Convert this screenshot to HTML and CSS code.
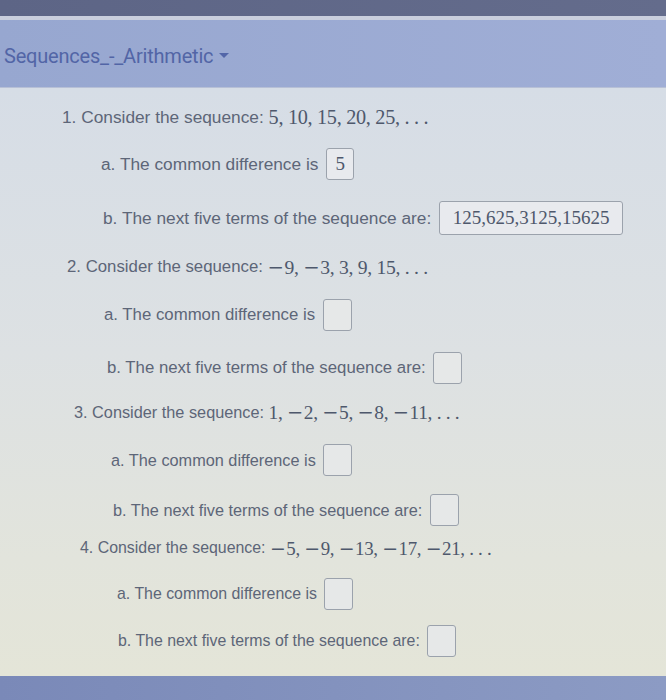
FILE: index.html
```html
<!DOCTYPE html>
<html>
<head>
<meta charset="utf-8">
<link rel="stylesheet" href="styles.css">
</head>
<body>
<div class="screen">
  <div class="topbar"></div>
  <div class="rule"></div>
  <header class="header">
    <span class="title">Sequences_-_Arithmetic</span>
    <svg class="caret" width="10" height="6" viewBox="0 0 10 6"><path d="M0 0 L10 0 L5 5 Z" fill="#5366a8"/></svg>
  </header>
  <main class="content">
    <section class="group g1">
      <div class="row q q1">1. Consider the sequence: <span class="math">5, 10, 15, 20, 25, . . .</span></div>
      <div class="row sub s1a">a. The common difference is <span class="box filled small">5</span></div>
      <div class="row sub s1b">b. The next five terms of the sequence are: <span class="box filled wide">125,625,3125,15625</span></div>
    </section>
    <section class="group g2">
      <div class="row q q2">2. Consider the sequence: <span class="math"><span class="m">−</span>9, <span class="m">−</span>3, 3, 9, 15, . . .</span></div>
      <div class="row sub s2a">a. The common difference is <span class="box empty"></span></div>
      <div class="row sub s2b">b. The next five terms of the sequence are: <span class="box empty"></span></div>
    </section>
    <section class="group g3">
      <div class="row q q3">3. Consider the sequence: <span class="math">1, <span class="m">−</span>2, <span class="m">−</span>5, <span class="m">−</span>8, <span class="m">−</span>11, . . .</span></div>
      <div class="row sub s3a">a. The common difference is <span class="box empty"></span></div>
      <div class="row sub s3b">b. The next five terms of the sequence are: <span class="box empty"></span></div>
    </section>
    <section class="group g4">
      <div class="row q q4">4. Consider the sequence: <span class="math"><span class="m">−</span>5, <span class="m">−</span>9, <span class="m">−</span>13, <span class="m">−</span>17, <span class="m">−</span>21, . . .</span></div>
      <div class="row sub s4a">a. The common difference is <span class="box empty"></span></div>
      <div class="row sub s4b">b. The next five terms of the sequence are: <span class="box empty"></span></div>
    </section>
  </main>
  <div class="bottombar"></div>
</div>
</body>
</html>
```

FILE: styles.css
```css
html, body {
  margin: 0;
  padding: 0;
}
body {
  width: 666px;
  height: 700px;
  overflow: hidden;
  font-family: "Liberation Sans", Arial, sans-serif;
}
.screen {
  display: flex;
  flex-direction: column;
  height: 700px;
  background: #d8dde3;
}
.topbar {
  height: 16px;
  background: linear-gradient(90deg, #5d6586, #646c8c);
}
.rule {
  height: 4px;
  background: #c9cedd;
}
.header {
  height: 67px;
  background: linear-gradient(90deg, #97a7d0, #a0aed6);
  display: flex;
  align-items: center;
  padding-left: 4px;
  gap: 6px;
  border-bottom: 1px solid #b7c0d6;
}
.title {
  font-family: Roboto, "Liberation Sans", sans-serif;
  font-size: 20px;
  color: #5265a6;
  letter-spacing: -0.2px;
  padding-top: 4px;
}
.caret {
  margin-top: 4px;
}
.content {
  flex: 1;
  display: flex;
  flex-direction: column;
  padding-top: 11px;
  background: linear-gradient(180deg, #d6dde6 0%, #dde1e3 45%, #e2e4dc 80%, #e4e5d8 100%);
  color: #5d6678;
}
.group {
  display: flex;
  flex-direction: column;
}
.g1 { font-size: 17.3px; }
.g2 { font-size: 16.8px; }
.g3 { font-size: 16.3px; }
.g4 { font-size: 15.9px; }
.row {
  display: flex;
  align-items: center;
  white-space: pre;
  height: 36px;
}
.math {
  font-family: "Liberation Serif", "Times New Roman", serif;
  font-size: 1.17em;
  color: #4e586c;
  letter-spacing: -0.3px;
}
.m {
  font-family: "DejaVu Serif", serif;
  letter-spacing: 0;
  padding-right: 0.5px;
}
.g3 .math {
  font-size: 1.19em;
}
.g4 .math {
  font-size: 1.19em;
}
.box {
  display: inline-flex;
  align-items: center;
  justify-content: center;
  border: 1px solid #9ba2ac;
  border-radius: 3px;
  background: #e8eaee;
  box-sizing: border-box;
  margin-left: 3px;
}
.box.filled {
  font-family: "Liberation Serif", "Times New Roman", serif;
  font-size: 19px;
  color: #4e586c;
  height: 32px;
}
.box.small {
  width: 28px;
}
.box.wide {
  width: 184px;
  height: 34px;
}
.box.empty {
  width: 29px;
  height: 32px;
  background: #e6e8e8;
}

.q1 { padding-left: 62px; }
.s1a { padding-left: 101px; margin-top: 11px; }
.s1b { padding-left: 103px; margin-top: 18px; }
.q2 { padding-left: 67px; margin-top: 13px; }
.s2a { padding-left: 104px; margin-top: 12px; }
.s2b { padding-left: 107px; margin-top: 17px; }
.q3 { padding-left: 74px; margin-top: 8px; }
.s3a { padding-left: 111px; margin-top: 12px; }
.s3b { padding-left: 113px; margin-top: 14px; }
.q4 { padding-left: 80px; margin-top: 2px; }
.s4a { padding-left: 117px; margin-top: 10px; }
.s4b { padding-left: 118px; margin-top: 11px; }

.bottombar {
  height: 24px;
  background: linear-gradient(90deg, #7a89b8, #8c9bc4);
}
```
